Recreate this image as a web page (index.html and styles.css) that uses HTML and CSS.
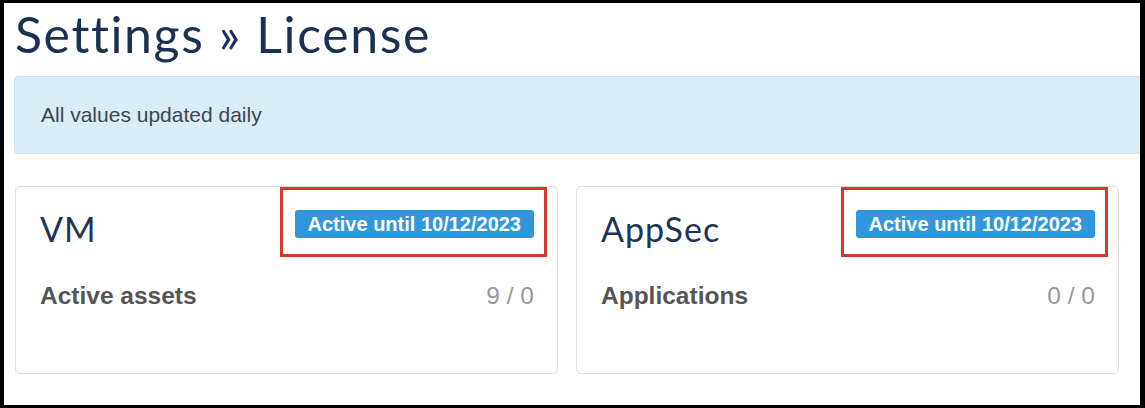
FILE: index.html
```html
<!DOCTYPE html>
<html lang="en">
<head>
<meta charset="utf-8">
<title>Settings » License</title>
<link rel="stylesheet" href="styles.css">
</head>
<body>
<div class="frame">
  <div class="content">
    <h1 class="page-title">Settings » License</h1>
    <div class="alert">All values updated daily</div>
    <div class="cards">
      <div class="card">
        <div class="card-head">
          <h2 class="card-title">VM</h2>
          <span class="badge">Active until 10/12/2023</span>
        </div>
        <div class="stat">
          <span class="stat-label">Active assets</span>
          <span class="stat-value">9 / 0</span>
        </div>
      </div>
      <div class="card">
        <div class="card-head">
          <h2 class="card-title">AppSec</h2>
          <span class="badge">Active until 10/12/2023</span>
        </div>
        <div class="stat">
          <span class="stat-label">Applications</span>
          <span class="stat-value">0 / 0</span>
        </div>
      </div>
    </div>
  </div>
</div>
</body>
</html>
```
FILE: styles.css
```css
html, body {
  margin: 0;
  padding: 0;
  background: #ffffff;
}

.frame {
  box-sizing: border-box;
  width: 1145px;
  height: 408px;
  border-style: solid;
  border-color: #000000;
  border-width: 3px 5px 3px 4px;
  overflow: hidden;
  background: #ffffff;
}

.content {
  width: 1160px;
  padding: 0 0 0 10px;
  box-sizing: border-box;
}

.page-title {
  margin: 0;
  padding: 5px 0 0 1px;
  font-family: Lato, "Open Sans", sans-serif;
  font-weight: 400;
  font-size: 50px;
  letter-spacing: 1.6px;
  line-height: 53px;
  color: #1c3152;
}

.alert {
  margin-top: 15px;
  box-sizing: border-box;
  height: 78px;
  padding: 0 26px;
  display: flex;
  align-items: center;
  background: #d9edf7;
  border: 1px solid #c6e4f2;
  border-radius: 4px;
  font-family: "Liberation Sans", Arial, sans-serif;
  font-size: 21px;
  color: #3d4650;
}

.cards {
  margin: 32px 0 0 1px;
  display: grid;
  grid-template-columns: 543px 543px;
  column-gap: 18px;
}

.card {
  box-sizing: border-box;
  height: 188px;
  padding: 23px 23px 0 24px;
  border: 1px solid #dedede;
  border-radius: 5px;
  background: #ffffff;
}

.card-head {
  display: flex;
  justify-content: space-between;
  align-items: flex-start;
}

.card-title {
  margin: 2px 0 0 0;
  font-family: Lato, "Open Sans", sans-serif;
  font-weight: 400;
  font-size: 34px;
  letter-spacing: 1px;
  line-height: 34px;
  color: #1e3556;
}

.badge {
  position: relative;
  display: inline-block;
  height: 28px;
  padding: 0 13px;
  background: #3197dc;
  border-radius: 3px;
  font-family: "Liberation Sans", Arial, sans-serif;
  font-weight: 700;
  font-size: 20px;
  line-height: 28px;
  color: #ffffff;
  white-space: nowrap;
}

/* red annotation rectangle drawn over the badge */
.badge::after {
  content: "";
  position: absolute;
  top: -23px;
  bottom: -19px;
  left: -15px;
  right: -13px;
  border: 3px solid #d13b2b;
}

.stat {
  margin-top: 35px;
  display: flex;
  justify-content: space-between;
  align-items: baseline;
  font-family: "Liberation Sans", Arial, sans-serif;
  font-size: 24.5px;
  line-height: 30px;
}

.stat-label {
  font-weight: 700;
  color: #555555;
}

.stat-value {
  color: #999999;
}
```
